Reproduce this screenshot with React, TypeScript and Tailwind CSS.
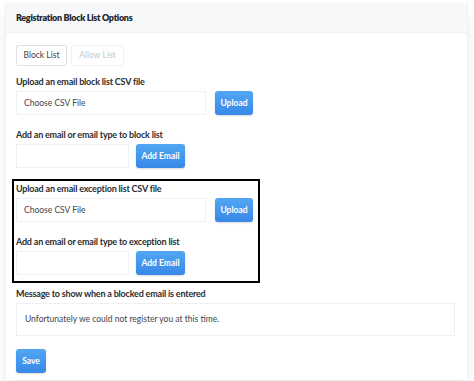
const font = { fontFamily: 'Lato, "Noto Sans", sans-serif' };

function BlueButton({ children, className = '' }: { children: React.ReactNode; className?: string }) {
  return (
    <button
      className={`block h-[24px] rounded-[3px] bg-gradient-to-b from-[#52a6f2] to-[#3788e8] text-[8.5px] font-bold text-white shadow-[0_1px_2px_rgba(0,0,0,0.15)] ${className}`}
    >
      {children}
    </button>
  );
}

function Label({ children }: { children: React.ReactNode }) {
  return (
    <div className="text-[9px] font-bold leading-[12px] tracking-[-0.2px] text-[#2b2d33]">{children}</div>
  );
}

function FileRow() {
  return (
    <div className="mt-[3px] flex items-center gap-[9px]">
      <div className="flex h-[24px] w-[190px] items-center border border-[#eef0f3] px-[7px] text-[8.5px] text-[#444]">
        Choose CSV File
      </div>
      <BlueButton className="w-[38px]">Upload</BlueButton>
    </div>
  );
}

function EmailRow() {
  return (
    <div className="mt-[3px] flex items-center gap-[7px]">
      <div className="h-[24px] w-[113px] border border-[#eef0f3]" />
      <BlueButton className="w-[49px]">Add Email</BlueButton>
    </div>
  );
}

export default function App() {
  return (
    <div className="h-[381px] w-[474px] overflow-hidden bg-white" style={font}>
      <div className="ml-[5px] mt-[3px] w-[463px] border-l border-r border-[#f0f1f3] bg-white shadow-[0_10px_12px_rgba(0,0,0,0.08)]">
        <div className="flex h-[30px] items-center border-b border-[#f0f1f4] bg-[#f7f8fa] pl-[10px] text-[9px] font-extrabold tracking-[-0.3px] text-[#24262b]">
          Registration Block List Options
        </div>
        <div className="pl-[10px] pr-[13px] pt-[12px] pb-[7px]">
          <div className="flex gap-[4px]">
            <div className="flex h-[21px] w-[51px] items-center justify-center rounded-[2px] border border-[#dde1e8] text-[8.5px] text-[#444]">
              Block List
            </div>
            <div className="flex h-[21px] w-[53px] items-center justify-center rounded-[2px] border border-[#f0f1f4] text-[8.5px] text-[#c4c7cc]">
              Allow List
            </div>
          </div>

          <div className="mt-[10px]">
            <Label>Upload an email block list CSV file</Label>
            <FileRow />
          </div>

          <div className="mt-[14px]">
            <Label>Add an email or email type to block list</Label>
            <EmailRow />
          </div>

          <div className="-ml-[4px] mt-[11px] w-[248px] border-2 border-black pl-[2px] pb-[6px] pt-[2px]">
            <Label>Upload an email exception list CSV file</Label>
            <FileRow />
            <div className="mt-[14px]">
              <Label>Add an email or email type to exception list</Label>
              <EmailRow />
            </div>
          </div>

          <div className="mt-[5px]">
            <Label>Message to show when a blocked email is entered</Label>
            <div className="mt-[3px] h-[33px] w-[439px] border border-[#eef0f3] px-[8px] pt-[9px] text-[8.5px] text-[#444]">
              Unfortunately we could not register you at this time.
            </div>
          </div>

          <BlueButton className="mt-[13px] w-[30px]">Save</BlueButton>
        </div>
      </div>
    </div>
  );
}
